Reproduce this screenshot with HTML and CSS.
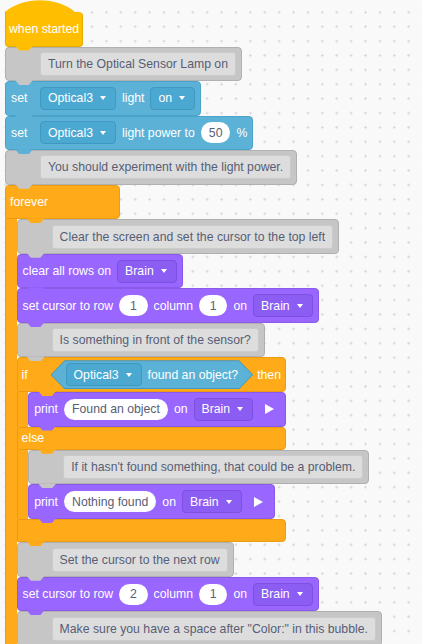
FILE: index.html
```html
<!DOCTYPE html>
<html lang="en">
  <head>
    <meta charset="UTF-8" />
    <meta name="viewport" content="width=device-width, initial-scale=1.0" />
    <title>Blocks</title>
    <link rel="stylesheet" href="styles.css">
  </head>
  <body>
    <main class="workspace">
      <div class="script">
        <div class="hat">
          <svg class="hat-cap" width="70" height="12" viewBox="0 0 70 12">
            <path d="M0 12 C17 -3.8 53 -3.8 70 12 Z" />
          </svg>
          <div class="block events">when started</div>
        </div>
        <div class="block comment"><span class="note">Turn the Optical Sensor Lamp on</span></div>
        <div class="block sensing">
          <span class="first">set</span>
          <span class="menu">Optical3<i class="caret"></i></span>
          light
          <span class="menu">on<i class="caret"></i></span>
        </div>
        <div class="block sensing">
          <span class="first">set</span>
          <span class="menu">Optical3<i class="caret"></i></span>
          light power to
          <span class="value">50</span>
          %
        </div>
        <div class="block comment"><span class="note">You should experiment with the light power.</span></div>

        <div class="c forever">
          <div class="block control c-head">forever</div>
          <div class="c-mouth">
            <div class="c-arm"></div>
            <div class="c-inner">
              <div class="block comment"><span class="note">Clear the screen and set the cursor to the top left</span></div>
              <div class="block looks">
                clear all rows on
                <span class="menu">Brain<i class="caret"></i></span>
              </div>
              <div class="block looks">
                set cursor to row
                <span class="value">1</span>
                column
                <span class="value">1</span>
                on
                <span class="menu">Brain<i class="caret"></i></span>
              </div>
              <div class="block comment"><span class="note">Is something in front of the sensor?</span></div>

              <div class="c c-if">
                <div class="block control c-head">
                  <span class="first">if</span>
                  <span class="bool">
                    <span class="bool-in">
                      <span class="menu">Optical3<i class="caret"></i></span>
                      found an object?
                    </span>
                  </span>
                  then
                </div>
                <div class="c-mouth">
                  <div class="c-arm"></div>
                  <div class="c-inner">
                    <div class="block looks">
                      print
                      <span class="value">Found an object</span>
                      on
                      <span class="menu">Brain<i class="caret"></i></span>
                      <span class="run"></span>
                    </div>
                  </div>
                </div>
                <div class="block control c-bar c-head">else</div>
                <div class="c-mouth">
                  <div class="c-arm"></div>
                  <div class="c-inner">
                    <div class="block comment"><span class="note">If it hasn't found something, that could be a problem.</span></div>
                    <div class="block looks">
                      print
                      <span class="value">Nothing found</span>
                      on
                      <span class="menu">Brain<i class="caret"></i></span>
                      <span class="run"></span>
                    </div>
                  </div>
                </div>
                <div class="block control c-bar"></div>
              </div>

              <div class="block comment"><span class="note">Set the cursor to the next row</span></div>
              <div class="block looks">
                set cursor to row
                <span class="value">2</span>
                column
                <span class="value">1</span>
                on
                <span class="menu">Brain<i class="caret"></i></span>
              </div>
              <div class="block comment"><span class="note">Make sure you have a space after "Color:" in this bubble.</span></div>
            </div>
          </div>
        </div>
      </div>
    </main>
  </body>
</html>
```

FILE: styles.css
```css
html,
body {
  margin: 0;
  height: 100%;
  overflow: hidden;
}
body {
  background-color: #f9f9f9;
  background-image: radial-gradient(circle, #d6d6d6 0.9px, transparent 1.4px);
  background-size: 14.4px 14.4px;
  background-position: -1.5px 5.1px;
  font-family: "Liberation Sans", Arial, sans-serif;
  font-size: 12.25px;
}
.script {
  display: flex;
  flex-direction: column;
  align-items: flex-start;
  margin-left: 5px;
}

/* blocks */
.block {
  position: relative;
  display: flex;
  align-items: center;
  gap: 6px;
  height: 34.56px;
  padding: 0 5px;
  box-sizing: border-box;
  border: 1px solid;
  border-radius: 4px;
  color: #fff;
  white-space: nowrap;
}
.block::after {
  content: "";
  position: absolute;
  left: 9px;
  top: 100%;
  width: 18px;
  height: 5px;
  background: inherit;
  clip-path: polygon(0 0, 100% 0, 76% 100%, 24% 100%);
  z-index: 2;
}
.first {
  min-width: 23px;
}
.events {
  background: #ffbf00;
  border-color: #e6ac00;
  border-top-color: #ffbf00;
  border-top-left-radius: 0;
  padding: 0 3px;
}
.sensing {
  background: #5cb1d6;
  border-color: #4aa3ca;
}
.looks {
  background: #9966ff;
  border-color: #8a5ae8;
}
.control {
  background: #ffab19;
  border-color: #eb9c12;
}
.comment {
  background: #c6c6c6;
  border-color: #b0b0b0;
  padding: 0 5px 0 34px;
}

.hat {
  display: flex;
  flex-direction: column;
  align-items: flex-start;
}
.hat-cap {
  display: block;
  fill: #ffbf00;
}

/* fields */
.note {
  display: flex;
  align-items: center;
  height: 24px;
  padding: 0 7px;
  box-sizing: border-box;
  background: #dddddd;
  border: 1px solid #cbcbcb;
  border-radius: 3px;
  color: #575e75;
}
.menu {
  display: flex;
  align-items: center;
  height: 23px;
  padding: 0 6px 0 7px;
  box-sizing: border-box;
  border: 1px solid;
  border-radius: 4px;
}
.sensing .menu,
.bool .menu {
  background: #4ba8d1;
  border-color: #3f98c1;
}
.looks .menu {
  background: #8c5df2;
  border-color: #7d50e0;
}
.caret {
  display: flex;
  justify-content: center;
  width: 12px;
  margin-left: 4px;
}
.caret::before {
  content: "";
  border-left: 3.5px solid transparent;
  border-right: 3.5px solid transparent;
  border-top: 4px solid #fff;
}
.value {
  display: flex;
  align-items: center;
  justify-content: center;
  height: 21px;
  min-width: 28.4px;
  padding: 0 8px;
  box-sizing: border-box;
  background: #fff;
  border-radius: 11px;
  color: #575e75;
}
.run {
  display: flex;
  justify-content: center;
  width: 21px;
}
.run::before {
  content: "";
  border-left: 9px solid #fff;
  border-top: 5.5px solid transparent;
  border-bottom: 5.5px solid transparent;
}

/* boolean hexagon */
.bool {
  display: flex;
  padding: 1px;
  background: #3f98c1;
  clip-path: polygon(14px 0, calc(100% - 14px) 0, 100% 50%, calc(100% - 14px) 100%, 14px 100%, 0 50%);
  margin-right: -2px;
}
.bool-in {
  display: flex;
  align-items: center;
  gap: 6px;
  height: 27px;
  padding: 0 14px;
  background: #5cb1d6;
  clip-path: polygon(13px 0, calc(100% - 13px) 0, 100% 50%, calc(100% - 13px) 100%, 13px 100%, 0 50%);
}

/* c blocks */
.c {
  display: flex;
  flex-direction: column;
}
.c-head {
  padding-left: 4px;
  border-bottom-left-radius: 0;
}
.c-head::after {
  left: 20.6px;
}
.forever > .c-head {
  width: 115px;
}
.c-if {
  width: 269px;
}
.c-bar {
  height: 23.3px;
  border-radius: 0 4px 4px 0;
}
.c-mouth {
  display: flex;
}
.c-arm {
  flex: none;
  width: 11.6px;
  background: #ffab19;
  border-left: 1px solid #eb9c12;
  box-sizing: border-box;
}
.c-inner {
  display: flex;
  flex-direction: column;
  align-items: flex-start;
}
```
